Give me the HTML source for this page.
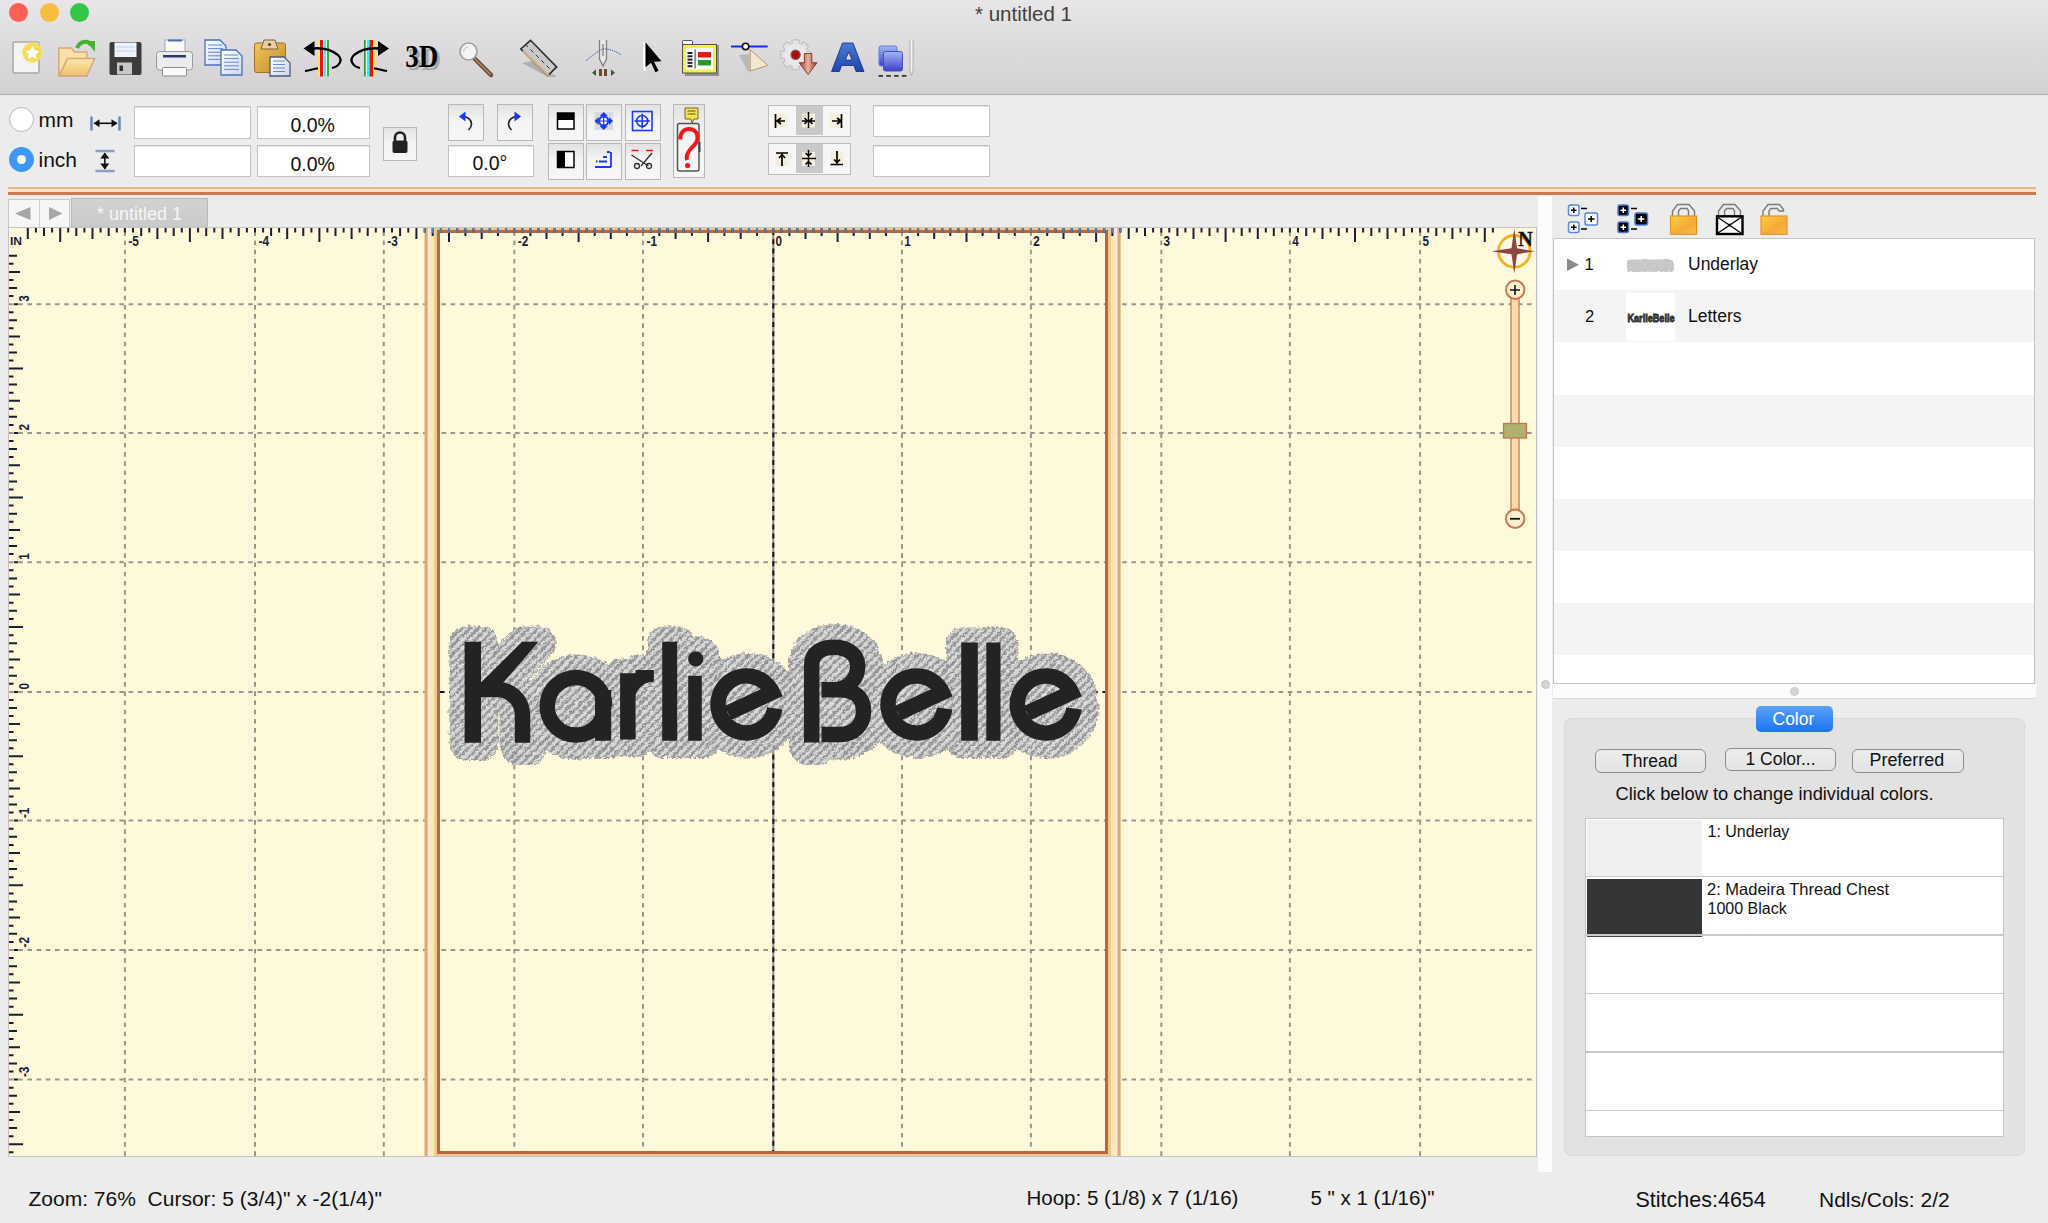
<!DOCTYPE html><html><head><meta charset="utf-8"><title>untitled 1</title><style>
*{box-sizing:border-box;margin:0;padding:0}
html,body{width:2048px;height:1223px;overflow:hidden;background:#ececec;font-family:"Liberation Sans",sans-serif;color:#111}
.a{position:absolute}
.t{position:absolute;white-space:nowrap;line-height:1}
.inp{position:absolute;background:#fff;border:1px solid #c3c3c3;box-shadow:inset 0 1px 0 #e4e4e4}
.btn{position:absolute;border:1.5px solid #b8b8b8;background:linear-gradient(#e2e2e2,#f4f4f4 45%,#f6f6f6)}
.pb{position:absolute;border:1px solid #8d8d8d;border-radius:6px;background:linear-gradient(#ececec,#e4e4e4);}
svg{position:absolute;overflow:visible}
</style></head><body>
<div class="a" style="left:0;top:0;width:2048px;height:95px;background:linear-gradient(#e8e6e8,#d2d0d2);border-bottom:1px solid #b0aeb0"></div>
<div class="a" style="left:8.899999999999999px;top:2.8px;width:19px;height:19px;border-radius:50%;background:#fd5f57"></div>
<div class="a" style="left:39.5px;top:2.8px;width:19px;height:19px;border-radius:50%;background:#f6be3f"></div>
<div class="a" style="left:70.2px;top:2.8px;width:19px;height:19px;border-radius:50%;background:#33c748"></div>
<div class="t" style="left:975px;top:4px;font-size:20.5px;color:#404040">* untitled 1</div>
<svg style="left:0;top:0" width="2048" height="95"><defs><linearGradient id="gfold" x1="0" y1="0" x2="0" y2="1"><stop offset="0" stop-color="#fbe7b0"/><stop offset="1" stop-color="#eec36a"/></linearGradient><linearGradient id="gclip" x1="0" y1="0" x2="1" y2="1"><stop offset="0" stop-color="#f0c860"/><stop offset="1" stop-color="#c08a28"/></linearGradient><linearGradient id="gdoc" x1="0" y1="0" x2="1" y2="1"><stop offset="0" stop-color="#ffffff"/><stop offset="1" stop-color="#c8d8f0"/></linearGradient><linearGradient id="gA" x1="0" y1="0" x2="0" y2="1"><stop offset="0" stop-color="#4a7ad8"/><stop offset="1" stop-color="#1a48a8"/></linearGradient><linearGradient id="gbd" x1="0" y1="0" x2="0" y2="1"><stop offset="0" stop-color="#a0b8f0"/><stop offset="1" stop-color="#4040c8"/></linearGradient><radialGradient id="gstar"><stop offset="0.5" stop-color="#fff27a"/><stop offset="1" stop-color="#fff27a" stop-opacity="0"/></radialGradient></defs><rect x="13" y="42" width="26" height="31" rx="1.5" fill="#f4f4f4" stroke="#a8a8a8" stroke-width="1.5"/><circle cx="32.3" cy="52.4" r="11.8" fill="url(#gstar)"/><circle cx="32.3" cy="52.4" r="10" fill="#f4d84a" opacity="0.8"/><path d="M32.30 44.80 L34.83 49.72 L40.29 50.60 L36.39 54.53 L37.24 60.00 L32.30 57.50 L27.36 60.00 L28.21 54.53 L24.31 50.60 L29.77 49.72Z" fill="#fff" stroke="#f0d020" stroke-width="0.8"/><path d="M58.8 48h12.5l3.5 4h12v24H58.8z" fill="#f8e0a8" stroke="#d8a878" stroke-width="1.5"/><path d="M67.5 58.6h27.2l-7.8 17.2H59z" fill="url(#gfold)" stroke="#d8a878" stroke-width="1.5"/><path d="M77 48c3-7 11-8 14-3" fill="none" stroke="#48b030" stroke-width="4"/><path d="M86 41h9v11z" fill="#48b030"/><rect x="109.5" y="42" width="32" height="33" rx="2" fill="#3c3c3c"/><rect x="114.5" y="42.5" width="22" height="14.5" fill="#eef2fa"/><path d="M116 47h19M116 51h19" stroke="#c0d0e8" stroke-width="1"/><rect x="117" y="62.5" width="15" height="12" fill="#c8c8c8"/><rect x="119.5" y="65.5" width="3.5" height="5.5" fill="#303030"/><rect x="165" y="40" width="20" height="15" fill="#fafafa" stroke="#9aa" stroke-width="1"/><rect x="168" y="39.5" width="14" height="2" fill="#4a70b0"/><rect x="156.5" y="51.5" width="36" height="18.5" rx="3" fill="#ececec" stroke="#9a9a9a" stroke-width="1"/><rect x="163" y="55" width="23" height="2.5" fill="#2a3a70"/><rect x="162.5" y="67.5" width="24" height="8.5" rx="1" fill="#fafafa" stroke="#8a8a8a" stroke-width="1"/><path d="M205 40h15l6 6v19h-21z" fill="url(#gdoc)" stroke="#4a70c0" stroke-width="1.3"/><path d="M208 45.0h14" stroke="#6a88c8" stroke-width="1"/><path d="M208 48.6h15" stroke="#6a88c8" stroke-width="1"/><path d="M208 52.2h15" stroke="#6a88c8" stroke-width="1"/><path d="M208 55.8h15" stroke="#6a88c8" stroke-width="1"/><path d="M208 59.4h15" stroke="#6a88c8" stroke-width="1"/><path d="M221 50h15l6 6v19h-21z" fill="url(#gdoc)" stroke="#4a70c0" stroke-width="1.3"/><path d="M224 55.0h14" stroke="#6a88c8" stroke-width="1"/><path d="M224 58.6h15" stroke="#6a88c8" stroke-width="1"/><path d="M224 62.2h15" stroke="#6a88c8" stroke-width="1"/><path d="M224 65.8h15" stroke="#6a88c8" stroke-width="1"/><path d="M224 69.4h15" stroke="#6a88c8" stroke-width="1"/><rect x="254.5" y="43" width="31" height="29.5" rx="2" fill="url(#gclip)" stroke="#a07020" stroke-width="1"/><path d="M264 40h11l3 9h-17z" fill="#e8d0a0" stroke="#806040" stroke-width="1"/><circle cx="269.5" cy="44.5" r="1.6" fill="#604020"/><path d="M270 57h14l6 6v13h-20z" fill="url(#gdoc)" stroke="#505a70" stroke-width="1.3"/><path d="M273 61.0h12" stroke="#6a88c8" stroke-width="1"/><path d="M273 64.5h12" stroke="#6a88c8" stroke-width="1"/><path d="M273 68.0h12" stroke="#6a88c8" stroke-width="1"/><path d="M273 71.5h12" stroke="#6a88c8" stroke-width="1"/><rect x="318.2" y="40" width="1.8" height="36.5" fill="#ffee30"/><rect x="320.0" y="40" width="3" height="36.5" fill="#e81010"/><rect x="323.0" y="40" width="1" height="36.5" fill="#ffffff"/><rect x="324.0" y="40" width="2.2" height="36.5" fill="#30f0f8"/><rect x="326.2" y="40" width="1" height="36.5" fill="#ffffff"/><rect x="327.2" y="40" width="1.6" height="36.5" fill="#20a020"/><path d="M303.5 48.5l11-7.5v15z" fill="#000"/><path d="M313 48.5c10-1 18 1 25 6.5c5 5 2 11-6 13" fill="none" stroke="#000" stroke-width="2.3"/><path d="M305 71c5-1 9-2 13-2.8" fill="none" stroke="#000" stroke-width="2"/><rect x="364.0" y="40" width="1.8" height="36.5" fill="#20a020"/><rect x="365.8" y="40" width="1.1" height="36.5" fill="#ffffff"/><rect x="366.9" y="40" width="2.7" height="36.5" fill="#30f0f8"/><rect x="369.6" y="40" width="3.4" height="36.5" fill="#e81010"/><rect x="373.0" y="40" width="2" height="36.5" fill="#ffee30"/><path d="M389 48.5l-11-7.5v15z" fill="#000"/><path d="M379 48.5c-10-1-18 1-25 6.5c-5 5-2 11 6 13" fill="none" stroke="#000" stroke-width="2.3"/><path d="M387 71c-5-1-9-2-13-2.8" fill="none" stroke="#000" stroke-width="2"/><text x="408" y="70" font-family="Liberation Serif" font-weight="bold" font-size="31" fill="#a8a8a8" textLength="33" lengthAdjust="spacingAndGlyphs">3D</text><text x="405.3" y="67.3" font-family="Liberation Serif" font-weight="bold" font-size="31" fill="#000" textLength="33" lengthAdjust="spacingAndGlyphs">3D</text><path d="M474 58l17 17" stroke="#5a4a3a" stroke-width="4.5" stroke-linecap="round"/><path d="M474 58l17 17" stroke="#c09060" stroke-width="1.5"/><circle cx="468.5" cy="51.5" r="8.5" fill="#f4f4f4" stroke="#a0a0a0" stroke-width="1.6"/><path d="M463.5 52a5 5 0 0 1 5-5" stroke="#d0d0d0" stroke-width="1.5" fill="none"/><path d="M522 63l10 -2l25 16l-9 0z" fill="#a0a0a0" opacity="0.7"/><path d="M520.8 49l9.7-8.7l26.2 26.6l-8.7 8.7z" fill="#c8c8c8" stroke="#2a2a2a" stroke-width="1.6"/><path d="M523 51l26 25" stroke="#d8b080" stroke-width="2"/><path d="M525.0 44.0l3 3" stroke="#333" stroke-width="1"/><path d="M530.4 49.4l3 3" stroke="#333" stroke-width="1"/><path d="M535.8 54.8l3 3" stroke="#333" stroke-width="1"/><path d="M541.2 60.2l3 3" stroke="#333" stroke-width="1"/><path d="M546.6 65.6l3 3" stroke="#333" stroke-width="1"/><path d="M599.5 40v19l3.5 7l3.5-7v-19" fill="#e8e8e8" stroke="#808080" stroke-width="1.3"/><path d="M603 44v12" stroke="#606060" stroke-width="1"/><path d="M586 60.8c8-7 16-12 17-12c6 0 12 2 18 6" fill="none" stroke="#4a6aa8" stroke-width="1" stroke-dasharray="1.5 0.8"/><path d="M596 69.5v6.5l-4-3.2z" fill="#306030"/><path d="M611 69.5v6.5l4-3.2z" fill="#306030"/><rect x="599" y="69" width="3" height="7" fill="#704830"/><rect x="604" y="69" width="3" height="7" fill="#704830"/><path d="M644.5 42v29" stroke="#fff" stroke-width="2.5"/><path d="M645.5 42.3v25l5.5-4.5l4.5 9.5l3-1.5l-4.5-9l7.5-.5z" fill="#000"/><rect x="685" y="45" width="34" height="31" fill="#909090"/><rect x="682.5" y="40.5" width="10" height="6" rx="1" fill="#fff" stroke="#555" stroke-width="1"/><rect x="682.5" y="44.5" width="34" height="28.5" fill="#f8f040" stroke="#505050" stroke-width="1"/><rect x="686" y="48" width="27" height="21.5" fill="#fff"/><rect x="687.5" y="52.0" width="5" height="2" fill="#222"/><rect x="687.5" y="55.3" width="5" height="2" fill="#222"/><rect x="687.5" y="58.6" width="5" height="2" fill="#222"/><rect x="687.5" y="61.9" width="5" height="2" fill="#222"/><rect x="687.5" y="65.2" width="5" height="2" fill="#222"/><rect x="694.5" y="49.5" width="1.2" height="19" fill="#555"/><rect x="698" y="52" width="13" height="5.5" fill="#e81818"/><rect x="698" y="60" width="13" height="5.5" fill="#289828"/><path d="M739 55l10.5 19l0-20z" fill="#b0b0b0" opacity="0.8"/><path d="M750.2 49.5l17.5 15.9l-17.5 5.6z" fill="#f2e8d0" stroke="#c09070" stroke-width="1"/><path d="M731 46.4h36.7" stroke="#1a2af0" stroke-width="2"/><circle cx="745.6" cy="46.4" r="3.2" fill="#fff" stroke="#111" stroke-width="1.6"/><rect x="-3.6" y="-15" width="7.2" height="8" rx="1.5" transform="translate(795.6 54.8) rotate(0)" fill="#e2e2e2" stroke="#bcbcbc" stroke-width="1"/><rect x="-3.6" y="-15" width="7.2" height="8" rx="1.5" transform="translate(795.6 54.8) rotate(45)" fill="#e2e2e2" stroke="#bcbcbc" stroke-width="1"/><rect x="-3.6" y="-15" width="7.2" height="8" rx="1.5" transform="translate(795.6 54.8) rotate(90)" fill="#e2e2e2" stroke="#bcbcbc" stroke-width="1"/><rect x="-3.6" y="-15" width="7.2" height="8" rx="1.5" transform="translate(795.6 54.8) rotate(135)" fill="#e2e2e2" stroke="#bcbcbc" stroke-width="1"/><rect x="-3.6" y="-15" width="7.2" height="8" rx="1.5" transform="translate(795.6 54.8) rotate(180)" fill="#e2e2e2" stroke="#bcbcbc" stroke-width="1"/><rect x="-3.6" y="-15" width="7.2" height="8" rx="1.5" transform="translate(795.6 54.8) rotate(225)" fill="#e2e2e2" stroke="#bcbcbc" stroke-width="1"/><rect x="-3.6" y="-15" width="7.2" height="8" rx="1.5" transform="translate(795.6 54.8) rotate(270)" fill="#e2e2e2" stroke="#bcbcbc" stroke-width="1"/><rect x="-3.6" y="-15" width="7.2" height="8" rx="1.5" transform="translate(795.6 54.8) rotate(315)" fill="#e2e2e2" stroke="#bcbcbc" stroke-width="1"/><circle cx="795.6" cy="54.8" r="11.3" fill="#e8e8e8"/><circle cx="795.6" cy="54.8" r="4.6" fill="#a81010" stroke="#8a5a40" stroke-width="1.2"/><defs><linearGradient id="garr" x1="0" y1="0" x2="1" y2="0"><stop offset="0" stop-color="#9a3a2a"/><stop offset="0.5" stop-color="#e8b0a0"/><stop offset="1" stop-color="#9a3a2a"/></linearGradient></defs><path d="M804.4 53.5h7.4v9.3h5.1l-8.8 11.8l-8.8-11.8h5.1z" fill="url(#garr)" stroke="#7a3020" stroke-width="0.9"/><path d="M842.5 43h10.5l11 28.5h-8l-2-6h-12.5l-2 6h-8zM845.3 60h6.8l-3.4-8z" fill="url(#gA)" stroke="#102a80" stroke-width="0.8" fill-rule="evenodd"/><rect x="879" y="46" width="18" height="20" rx="2" fill="url(#gbd)" stroke="#6080d0" stroke-width="1"/><rect x="883.5" y="51.5" width="19" height="19.5" rx="2" fill="url(#gbd)" stroke="#4050c0" stroke-width="1"/><path d="M878.5 75.8h28" stroke="#333" stroke-width="1.8" stroke-dasharray="4.5 3.3"/><path d="M910 40v30l1.5 6l1.5-6v-30" fill="#f4f4f4" stroke="#b0b0b0" stroke-width="1"/></svg>
<div class="a" style="left:9px;top:107.2px;width:25px;height:25px;border-radius:50%;background:#fff;border:1px solid #b8b8b8"></div>
<div class="a" style="left:9px;top:147px;width:25px;height:25px;border-radius:50%;background:#3d97f7"></div>
<div class="a" style="left:17px;top:155px;width:9px;height:9px;border-radius:50%;background:#fff"></div>
<div class="t" style="left:38.5px;top:109px;font-size:21px">mm</div>
<div class="t" style="left:38.5px;top:149px;font-size:21px">inch</div>
<svg style="left:0;top:0" width="200" height="190"><path d="M91.5 116.5v14M119.5 116.5v14" stroke="#6a88b8" stroke-width="2.5"/><path d="M94 123.3h23" stroke="#111" stroke-width="1.6"/><path d="M93.5 123.3l6-4v8z M117.5 123.3l-6-4v8z" fill="#111"/><path d="M95.5 151h19M95.5 171h19" stroke="#8aa0c0" stroke-width="2.5"/><path d="M104.8 153v16" stroke="#111" stroke-width="1.6"/><path d="M104.8 152.5l-4.5 6h9z M104.8 169.5l-4.5-6h9z" fill="#111"/></svg>
<div class="inp" style="left:134px;top:106px;width:117px;height:33px"></div>
<div class="inp" style="left:257px;top:106px;width:113px;height:33px"></div>
<div class="inp" style="left:134px;top:145px;width:117px;height:32px"></div>
<div class="inp" style="left:257px;top:145px;width:113px;height:32px"></div>
<div class="inp" style="left:448px;top:145px;width:86px;height:32px"></div>
<div class="inp" style="left:873px;top:105px;width:117px;height:32px"></div>
<div class="inp" style="left:873px;top:145px;width:117px;height:32px"></div>
<div class="t" style="left:290.5px;top:116px;font-size:19.5px">0.0%</div>
<div class="t" style="left:290.5px;top:154.5px;font-size:19.5px">0.0%</div>
<div class="t" style="left:472.5px;top:154px;font-size:19.5px">0.0°</div>
<div class="btn" style="left:383px;top:127px;width:34px;height:34px"></div>
<svg style="left:0;top:0" width="420" height="170"><path d="M395 141v-3.5a5 5 0 0 1 10 0v3.5" fill="none" stroke="#222" stroke-width="2.6"/><rect x="392.5" y="140.5" width="15" height="12.5" rx="2" fill="#222"/></svg>
<div class="btn" style="left:448px;top:104px;width:36px;height:37px"></div>
<div class="btn" style="left:497px;top:104px;width:36px;height:37px"></div>
<svg style="left:0;top:0" width="540" height="145"><path d="M462.5 116.5c5 0 9 3 9 7.5c0 2.5-1.5 4.5-3 6" fill="none" stroke="#222" stroke-width="1.6"/><path d="M459 116.5l6.5-5v10z" fill="#1a3af0"/><path d="M517.5 116.5c-5 0-9 3-9 7.5c0 2.5 1.5 4.5 3 6" fill="none" stroke="#222" stroke-width="1.6"/><path d="M521 116.5l-6.5-5v10z" fill="#1a3af0"/></svg>
<div class="btn" style="left:547.5px;top:104px;width:36px;height:36.5px"></div>
<div class="btn" style="left:547.5px;top:143px;width:36px;height:36.5px"></div>
<div class="btn" style="left:586px;top:104px;width:36px;height:36.5px"></div>
<div class="btn" style="left:586px;top:143px;width:36px;height:36.5px"></div>
<div class="btn" style="left:624.5px;top:104px;width:36px;height:36.5px"></div>
<div class="btn" style="left:624.5px;top:143px;width:36px;height:36.5px"></div>
<svg style="left:0;top:0" width="720" height="185"><rect x="557.5" y="113" width="16.5" height="16" fill="#fff" stroke="#000" stroke-width="1.5"/><rect x="557.5" y="113" width="16.5" height="7" fill="#000"/><rect x="557.5" y="151.5" width="16.5" height="16" fill="#fff" stroke="#000" stroke-width="1.5"/><rect x="557.5" y="151.5" width="7.5" height="16" fill="#000"/><rect x="594.5" y="112" width="18.5" height="18" fill="#d8d8e0"/><path d="M603.7 112l-4 4h8zM603.7 130l-4-4h8zM594.5 121l4-4v8zM613 121l-4-4v8z" fill="#1a3af0"/><circle cx="603.7" cy="121" r="4.5" fill="#fff" stroke="#1a3af0" stroke-width="2"/><path d="M603.7 116v10M598.7 121h10" stroke="#1a3af0" stroke-width="1.2"/><rect x="632.5" y="111.5" width="19.5" height="19" fill="none" stroke="#1a3af0" stroke-width="1.6"/><circle cx="642.2" cy="121" r="5.5" fill="none" stroke="#1a3af0" stroke-width="1.6"/><path d="M642.2 113.5v15M634.5 121h15.5" stroke="#1a3af0" stroke-width="1.6"/><path d="M607 152h3M611 152v15M595 167h16M599 161.5h8M596 161.5h1.5M603 157h4" stroke="#1a3af0" stroke-width="1.8"/><path d="M631.5 150.5h7M646 150.5h7" stroke="#e81818" stroke-width="1.6"/><path d="M631.5 155l17 11M652 153l-11 13" stroke="#333" stroke-width="1.3"/><circle cx="637" cy="166" r="2.5" fill="none" stroke="#333" stroke-width="1.3"/><circle cx="649" cy="166" r="2.5" fill="none" stroke="#333" stroke-width="1.3"/></svg>
<div class="btn" style="left:673px;top:104px;width:32px;height:73.5px"></div>
<svg style="left:0;top:0" width="720" height="185"><rect x="677.5" y="123.5" width="21.5" height="47.5" rx="2" fill="none" stroke="#555" stroke-width="1.5"/><rect x="698.5" y="142" width="2" height="10" fill="#444"/><path d="M685 108h13v11h-4l-2 4l-1-4h-6z" fill="#f8e048" stroke="#6a6a20" stroke-width="1"/><path d="M687.5 111h8M687.5 114h8" stroke="#555" stroke-width="1"/><path d="M680.3 139.5C680.3 132 684.5 129 689 129C694 129 697.5 132.5 697.5 138C697.5 146 688 147.5 686.8 156.5C686.6 158 686.8 159 687 160" fill="none" stroke="#f01818" stroke-width="4"/><circle cx="687.6" cy="165.6" r="2.6" fill="#f01818"/></svg>
<div class="a" style="left:768px;top:104.5px;width:83px;height:32px;border:1.5px solid #bdbdbd;background:#f6f6f6"></div>
<div class="a" style="left:795.5px;top:106.0px;width:27px;height:29px;background:#c9c9c9"></div>
<div class="a" style="left:768px;top:142.5px;width:83px;height:32px;border:1.5px solid #bdbdbd;background:#f6f6f6"></div>
<div class="a" style="left:795.5px;top:144.0px;width:27px;height:29px;background:#c9c9c9"></div>
<svg style="left:0;top:0" width="860" height="185"><rect x="774.5" y="113.5" width="13" height="14" fill="#f3efdc"/><rect x="802.0" y="113.5" width="13" height="14" fill="#f3efdc"/><rect x="829.5" y="113.5" width="13" height="14" fill="#f3efdc"/><rect x="775.5" y="152" width="13" height="14" fill="#f3efdc"/><rect x="802.0" y="152" width="13" height="14" fill="#f3efdc"/><rect x="830.5" y="152" width="13" height="14" fill="#f3efdc"/><path d="M775.5 114v14M776 121h9M781 118l-4 3l4 3" stroke="#000" stroke-width="1.7" fill="none"/><path d="M808.5 112v16M802 121h13M804.5 118l3 3l-3 3M812.5 118l-3 3l3 3" stroke="#000" stroke-width="1.5" fill="none"/><path d="M841.5 114v14M832 121h9M837 118l4 3l-4 3" stroke="#000" stroke-width="1.7" fill="none"/><path d="M776 153h12M782 154v12M779 158l3-3.5l3 3.5" stroke="#000" stroke-width="1.7" fill="none"/><path d="M802 158.5h14M808.5 150v17M805.5 153l3 3l3-3M805.5 164.5l3-3l3 3" stroke="#000" stroke-width="1.5" fill="none"/><path d="M830.5 164.5h12.5M837 151v12.5M834 159.5l3 3l3-3" stroke="#000" stroke-width="1.7" fill="none"/></svg>
<div class="a" style="left:8px;top:187px;width:2028px;height:8px;background:linear-gradient(#e8b78a 0,#e8b78a 2px,#fbe3cf 2px,#fbe3cf 5px,#c97a50 5px,#c97a50 8px)"></div>
<div class="a" style="left:8px;top:199px;width:62px;height:29px;background:#f6f6f6;border:1px solid #c8c8c8;border-bottom:none"></div>
<div class="a" style="left:39px;top:200px;width:1px;height:27px;background:#d0d0d0"></div>
<svg style="left:0;top:0" width="80" height="230"><path d="M15 213.5l15.5-6.5v13z" fill="#a6a6a6"/><path d="M62.5 213.5l-13.5-6.5v13z" fill="#a6a6a6"/></svg>
<div class="a" style="left:70.5px;top:197.5px;width:137px;height:30px;background:linear-gradient(#d2d2d2,#c9c9c9);border:1px solid #b8b8b8;border-bottom:none"></div>
<div class="t" style="left:97px;top:204.5px;font-size:18px;color:#f6f6f6">* untitled 1</div>
<svg style="left:0;top:0" width="2048" height="1223"><defs><pattern id="hatch" width="6" height="6" patternUnits="userSpaceOnUse" patternTransform="rotate(-45)"><rect width="6" height="6" fill="#c0c0c0"/><rect width="6" height="1.7" fill="#8c8c8c"/><rect y="3" width="6" height="1.5" fill="#e2e2e2"/></pattern><filter id="rough" x="-5%" y="-20%" width="110%" height="140%"><feTurbulence type="turbulence" baseFrequency="0.22" numOctaves="2" seed="5" result="n"/><feDisplacementMap in="SourceGraphic" in2="n" scale="4.5" xChannelSelector="R" yChannelSelector="G"/></filter></defs><rect x="8" y="227" width="1529" height="930" fill="#c4c4c4"/><rect x="9" y="228" width="1527" height="928" fill="#fff9db"/><clipPath id="cc"><rect x="9" y="228" width="1527" height="928"/></clipPath><g clip-path="url(#cc)"><path d="M124.9 228V1156 M255.0 228V1156 M383.8 228V1156 M514.3 228V1156 M643.0 228V1156 M902.0 228V1156 M1030.9 228V1156 M1161.3 228V1156 M1289.9 228V1156 M1420.1 228V1156" stroke="#98988f" stroke-width="2" stroke-dasharray="4.6 4.6" stroke-dashoffset="-3.3" fill="none"/><path d="M9 304.2H1536 M9 432.9H1536 M9 562.2H1536 M9 691.9H1536 M9 820.6H1536 M9 950.0H1536 M9 1079.6H1536" stroke="#98988f" stroke-width="2" stroke-dasharray="4.6 4.6" fill="none"/><path d="M440 691.9H1105" stroke="#fff9db" stroke-width="2.5"/><path d="M440 691.9H1105" stroke="#161616" stroke-width="2" stroke-dasharray="4.6 4.6"/><path d="M773.3 228V1156" stroke="#8a8a8a" stroke-width="2"/><path d="M773.3 228V1156" stroke="#161616" stroke-width="2" stroke-dasharray="5 4.2" stroke-dashoffset="-2"/><rect x="424.5" y="228" width="3.3" height="928" fill="#dba972"/><rect x="427.8" y="228" width="3.1" height="928" fill="#fde4d8"/><rect x="430.9" y="228" width="3.3" height="928" fill="#fdeba0"/><rect x="1117.3" y="228" width="3.3" height="928" fill="#dba972"/><rect x="1114.1" y="228" width="3.2" height="928" fill="#fde4d8"/><rect x="1111" y="228" width="3.1" height="928" fill="#fdeba0"/><path d="M434.2 228H1111V1156H434.2ZM437 230V1154H1108V230Z" fill="#ebc892" fill-rule="evenodd"/><path d="M437 230H1108V1154H437ZM440 233V1151H1105V233Z" fill="#b9683e" fill-rule="evenodd"/><g><g filter="url(#rough)"><path d="M464.6 641.7H481V742.8H464.6Z M522 641.7H538.5L497 690H481V682.5Z M595 690H611.2V740.8H595Z M620.1 673.2H635.6V739.6H620.1Z M635.6 670.1H653.9V681.8C645 681.8 638 687 635.6 695.4Z M662.2 641.7H677.2V740.8H662.2Z M688.2 675.8H701.8V740.8H688.2Z M961.2 642.6H977.8V740.7H961.2Z M986.3 642.6H1000.5V740.7H986.3Z" fill="#a0a0a0" stroke="#a0a0a0" stroke-width="32.4" stroke-linejoin="round"/><path d="M481 689.5H497A25.5 25.5 0 0 1 522.5 715V742.8 M602.06 718.45A28.75 28.75 0 1 1 604.75 706.3 M811.7 742.4V665C811.7 652 822 647.3 834.7 647.3C848 647.3 857.7 655 857.7 666C857.7 677 850 689.8 834 689.8H821.5 M821.5 689.8H840C855 689.8 863.5 698 863.5 711C863.5 726 853 734.5 840 734.5H821.5 M774.72 708.37A28.5 28.5 0 1 1 772.33 692.36L728.00 713.00 M944.72 708.47A28.5 28.5 0 1 1 942.33 692.46L898.00 713.10 M1074.02 708.47A28.5 28.5 0 1 1 1071.63 692.46L1027.30 713.10" fill="none" stroke="#a0a0a0" stroke-width="47.9" stroke-linecap="round" stroke-linejoin="round"/><circle cx="695.7" cy="658.8" r="23.799999999999997" fill="#a0a0a0"/><circle cx="576" cy="706.3" r="22" fill="#a0a0a0"/><circle cx="746.5" cy="704.4" r="22" fill="#a0a0a0"/><circle cx="916.5" cy="704.5" r="22" fill="#a0a0a0"/><circle cx="1045.8" cy="704.5" r="22" fill="#a0a0a0"/><circle cx="835" cy="668" r="14" fill="#a0a0a0"/><circle cx="840" cy="712" r="16" fill="#a0a0a0"/><path d="M464.6 641.7H481V742.8H464.6Z M522 641.7H538.5L497 690H481V682.5Z M595 690H611.2V740.8H595Z M620.1 673.2H635.6V739.6H620.1Z M635.6 670.1H653.9V681.8C645 681.8 638 687 635.6 695.4Z M662.2 641.7H677.2V740.8H662.2Z M688.2 675.8H701.8V740.8H688.2Z M961.2 642.6H977.8V740.7H961.2Z M986.3 642.6H1000.5V740.7H986.3Z" fill="url(#hatch)" stroke="url(#hatch)" stroke-width="30.4" stroke-linejoin="round"/><path d="M481 689.5H497A25.5 25.5 0 0 1 522.5 715V742.8 M602.06 718.45A28.75 28.75 0 1 1 604.75 706.3 M811.7 742.4V665C811.7 652 822 647.3 834.7 647.3C848 647.3 857.7 655 857.7 666C857.7 677 850 689.8 834 689.8H821.5 M821.5 689.8H840C855 689.8 863.5 698 863.5 711C863.5 726 853 734.5 840 734.5H821.5 M774.72 708.37A28.5 28.5 0 1 1 772.33 692.36L728.00 713.00 M944.72 708.47A28.5 28.5 0 1 1 942.33 692.46L898.00 713.10 M1074.02 708.47A28.5 28.5 0 1 1 1071.63 692.46L1027.30 713.10" fill="none" stroke="url(#hatch)" stroke-width="45.9" stroke-linecap="round" stroke-linejoin="round"/><circle cx="695.7" cy="658.8" r="22.799999999999997" fill="url(#hatch)"/><circle cx="576" cy="706.3" r="22" fill="url(#hatch)"/><circle cx="746.5" cy="704.4" r="22" fill="url(#hatch)"/><circle cx="916.5" cy="704.5" r="22" fill="url(#hatch)"/><circle cx="1045.8" cy="704.5" r="22" fill="url(#hatch)"/><circle cx="835" cy="668" r="14" fill="url(#hatch)"/><circle cx="840" cy="712" r="16" fill="url(#hatch)"/></g><path d="M464.6 641.7H481V742.8H464.6Z M522 641.7H538.5L497 690H481V682.5Z M595 690H611.2V740.8H595Z M620.1 673.2H635.6V739.6H620.1Z M635.6 670.1H653.9V681.8C645 681.8 638 687 635.6 695.4Z M662.2 641.7H677.2V740.8H662.2Z M688.2 675.8H701.8V740.8H688.2Z M961.2 642.6H977.8V740.7H961.2Z M986.3 642.6H1000.5V740.7H986.3Z" fill="#232325"/><path d="M481 689.5H497A25.5 25.5 0 0 1 522.5 715V742.8 M602.06 718.45A28.75 28.75 0 1 1 604.75 706.3 M811.7 742.4V665C811.7 652 822 647.3 834.7 647.3C848 647.3 857.7 655 857.7 666C857.7 677 850 689.8 834 689.8H821.5 M821.5 689.8H840C855 689.8 863.5 698 863.5 711C863.5 726 853 734.5 840 734.5H821.5 M774.72 708.37A28.5 28.5 0 1 1 772.33 692.36L728.00 713.00 M944.72 708.47A28.5 28.5 0 1 1 942.33 692.46L898.00 713.10 M1074.02 708.47A28.5 28.5 0 1 1 1071.63 692.46L1027.30 713.10" fill="none" stroke="#232325" stroke-width="15.5"/><circle cx="695.7" cy="658.8" r="7.6" fill="#232325"/></g></g><path d="M27.8 228v11 M35.9 228v4.5 M44.0 228v8 M52.1 228v4.5 M60.2 228v14 M68.2 228v4.5 M76.3 228v8 M84.4 228v4.5 M92.5 228v11 M100.6 228v4.5 M108.7 228v8 M116.8 228v4.5 M124.9 228v4.5 M133.0 228v4.5 M141.2 228v8 M149.3 228v4.5 M157.4 228v11 M165.6 228v4.5 M173.7 228v8 M181.8 228v4.5 M189.9 228v14 M198.1 228v4.5 M206.2 228v8 M214.3 228v4.5 M222.5 228v11 M230.6 228v4.5 M238.7 228v8 M246.9 228v4.5 M255.0 228v4.5 M263.1 228v4.5 M271.1 228v8 M279.1 228v4.5 M287.2 228v11 M295.2 228v4.5 M303.3 228v8 M311.4 228v4.5 M319.4 228v14 M327.4 228v4.5 M335.5 228v8 M343.6 228v4.5 M351.6 228v11 M359.6 228v4.5 M367.7 228v8 M375.8 228v4.5 M383.8 228v4.5 M392.0 228v4.5 M400.1 228v8 M408.3 228v4.5 M416.4 228v11 M424.6 228v4.5 M432.7 228v8 M440.9 228v4.5 M449.0 228v14 M457.2 228v4.5 M465.4 228v8 M473.5 228v4.5 M481.7 228v11 M489.8 228v4.5 M498.0 228v8 M506.1 228v4.5 M514.3 228v4.5 M522.3 228v4.5 M530.4 228v8 M538.4 228v4.5 M546.5 228v11 M554.5 228v4.5 M562.6 228v8 M570.6 228v4.5 M578.6 228v14 M586.7 228v4.5 M594.7 228v8 M602.8 228v4.5 M610.8 228v11 M618.9 228v4.5 M626.9 228v8 M635.0 228v4.5 M643.0 228v4.5 M651.1 228v4.5 M659.3 228v8 M667.4 228v4.5 M675.6 228v11 M683.7 228v4.5 M691.9 228v8 M700.0 228v4.5 M708.1 228v14 M716.3 228v4.5 M724.4 228v8 M732.6 228v4.5 M740.7 228v11 M748.9 228v4.5 M757.0 228v8 M765.2 228v4.5 M773.3 228v4.5 M781.3 228v4.5 M789.4 228v8 M797.4 228v4.5 M805.5 228v11 M813.5 228v4.5 M821.6 228v8 M829.6 228v4.5 M837.6 228v14 M845.7 228v4.5 M853.7 228v8 M861.8 228v4.5 M869.8 228v11 M877.9 228v4.5 M885.9 228v8 M894.0 228v4.5 M902.0 228v4.5 M910.1 228v4.5 M918.1 228v8 M926.2 228v4.5 M934.2 228v11 M942.3 228v4.5 M950.3 228v8 M958.4 228v4.5 M966.5 228v14 M974.5 228v4.5 M982.6 228v8 M990.6 228v4.5 M998.7 228v11 M1006.7 228v4.5 M1014.8 228v8 M1022.8 228v4.5 M1030.9 228v4.5 M1039.1 228v4.5 M1047.2 228v8 M1055.4 228v4.5 M1063.5 228v11 M1071.7 228v4.5 M1079.8 228v8 M1088.0 228v4.5 M1096.1 228v14 M1104.2 228v4.5 M1112.4 228v8 M1120.5 228v4.5 M1128.7 228v11 M1136.8 228v4.5 M1145.0 228v8 M1153.1 228v4.5 M1161.3 228v4.5 M1169.3 228v4.5 M1177.4 228v8 M1185.4 228v4.5 M1193.5 228v11 M1201.5 228v4.5 M1209.5 228v8 M1217.6 228v4.5 M1225.6 228v14 M1233.6 228v4.5 M1241.7 228v8 M1249.7 228v4.5 M1257.8 228v11 M1265.8 228v4.5 M1273.8 228v8 M1281.9 228v4.5 M1289.9 228v4.5 M1298.0 228v4.5 M1306.2 228v8 M1314.3 228v4.5 M1322.5 228v11 M1330.6 228v4.5 M1338.7 228v8 M1346.9 228v4.5 M1355.0 228v14 M1363.1 228v4.5 M1371.3 228v8 M1379.4 228v4.5 M1387.5 228v11 M1395.7 228v4.5 M1403.8 228v8 M1412.0 228v4.5 M1420.1 228v4.5 M1428.2 228v4.5 M1436.3 228v8 M1444.4 228v4.5 M1452.4 228v11 M1460.5 228v4.5 M1468.6 228v8 M1476.7 228v4.5 M1484.8 228v14 M1492.9 228v4.5 M9 1152.3h4.5 M9 1144.2h14 M9 1136.2h4.5 M9 1128.1h8 M9 1120.0h4.5 M9 1111.9h11 M9 1103.8h4.5 M9 1095.8h8 M9 1087.7h4.5 M9 1071.5h4.5 M9 1063.4h8 M9 1055.3h4.5 M9 1047.2h11 M9 1039.1h4.5 M9 1031.0h8 M9 1022.9h4.5 M9 1014.8h14 M9 1006.7h4.5 M9 998.6h8 M9 990.5h4.5 M9 982.4h11 M9 974.3h4.5 M9 966.2h8 M9 958.1h4.5 M9 941.9h4.5 M9 933.8h8 M9 925.7h4.5 M9 917.6h11 M9 909.6h4.5 M9 901.5h8 M9 893.4h4.5 M9 885.3h14 M9 877.2h4.5 M9 869.1h8 M9 861.0h4.5 M9 853.0h11 M9 844.9h4.5 M9 836.8h8 M9 828.7h4.5 M9 812.6h4.5 M9 804.5h8 M9 796.5h4.5 M9 788.4h11 M9 780.4h4.5 M9 772.3h8 M9 764.3h4.5 M9 756.2h14 M9 748.2h4.5 M9 740.2h8 M9 732.1h4.5 M9 724.1h11 M9 716.0h4.5 M9 708.0h8 M9 699.9h4.5 M9 683.8h4.5 M9 675.7h8 M9 667.6h4.5 M9 659.5h11 M9 651.4h4.5 M9 643.3h8 M9 635.2h4.5 M9 627.0h14 M9 618.9h4.5 M9 610.8h8 M9 602.7h4.5 M9 594.6h11 M9 586.5h4.5 M9 578.4h8 M9 570.3h4.5 M9 554.1h4.5 M9 546.0h8 M9 538.0h4.5 M9 529.9h11 M9 521.8h4.5 M9 513.7h8 M9 505.6h4.5 M9 497.6h14 M9 489.5h4.5 M9 481.4h8 M9 473.3h4.5 M9 465.2h11 M9 457.1h4.5 M9 449.1h8 M9 441.0h4.5 M9 424.9h4.5 M9 416.8h8 M9 408.8h4.5 M9 400.7h11 M9 392.7h4.5 M9 384.6h8 M9 376.6h4.5 M9 368.5h14 M9 360.5h4.5 M9 352.5h8 M9 344.4h4.5 M9 336.4h11 M9 328.3h4.5 M9 320.3h8 M9 312.2h4.5 M9 296.1h4.5 M9 288.0h8 M9 280.0h4.5 M9 271.9h11 M9 263.8h4.5 M9 255.7h8" stroke="#1a2038" stroke-width="2"/><clipPath id="hooptop"><path d="M424 228H1121V233H424Z"/></clipPath><path d="M27.8 228v11 M35.9 228v4.5 M44.0 228v8 M52.1 228v4.5 M60.2 228v14 M68.2 228v4.5 M76.3 228v8 M84.4 228v4.5 M92.5 228v11 M100.6 228v4.5 M108.7 228v8 M116.8 228v4.5 M124.9 228v4.5 M133.0 228v4.5 M141.2 228v8 M149.3 228v4.5 M157.4 228v11 M165.6 228v4.5 M173.7 228v8 M181.8 228v4.5 M189.9 228v14 M198.1 228v4.5 M206.2 228v8 M214.3 228v4.5 M222.5 228v11 M230.6 228v4.5 M238.7 228v8 M246.9 228v4.5 M255.0 228v4.5 M263.1 228v4.5 M271.1 228v8 M279.1 228v4.5 M287.2 228v11 M295.2 228v4.5 M303.3 228v8 M311.4 228v4.5 M319.4 228v14 M327.4 228v4.5 M335.5 228v8 M343.6 228v4.5 M351.6 228v11 M359.6 228v4.5 M367.7 228v8 M375.8 228v4.5 M383.8 228v4.5 M392.0 228v4.5 M400.1 228v8 M408.3 228v4.5 M416.4 228v11 M424.6 228v4.5 M432.7 228v8 M440.9 228v4.5 M449.0 228v14 M457.2 228v4.5 M465.4 228v8 M473.5 228v4.5 M481.7 228v11 M489.8 228v4.5 M498.0 228v8 M506.1 228v4.5 M514.3 228v4.5 M522.3 228v4.5 M530.4 228v8 M538.4 228v4.5 M546.5 228v11 M554.5 228v4.5 M562.6 228v8 M570.6 228v4.5 M578.6 228v14 M586.7 228v4.5 M594.7 228v8 M602.8 228v4.5 M610.8 228v11 M618.9 228v4.5 M626.9 228v8 M635.0 228v4.5 M643.0 228v4.5 M651.1 228v4.5 M659.3 228v8 M667.4 228v4.5 M675.6 228v11 M683.7 228v4.5 M691.9 228v8 M700.0 228v4.5 M708.1 228v14 M716.3 228v4.5 M724.4 228v8 M732.6 228v4.5 M740.7 228v11 M748.9 228v4.5 M757.0 228v8 M765.2 228v4.5 M773.3 228v4.5 M781.3 228v4.5 M789.4 228v8 M797.4 228v4.5 M805.5 228v11 M813.5 228v4.5 M821.6 228v8 M829.6 228v4.5 M837.6 228v14 M845.7 228v4.5 M853.7 228v8 M861.8 228v4.5 M869.8 228v11 M877.9 228v4.5 M885.9 228v8 M894.0 228v4.5 M902.0 228v4.5 M910.1 228v4.5 M918.1 228v8 M926.2 228v4.5 M934.2 228v11 M942.3 228v4.5 M950.3 228v8 M958.4 228v4.5 M966.5 228v14 M974.5 228v4.5 M982.6 228v8 M990.6 228v4.5 M998.7 228v11 M1006.7 228v4.5 M1014.8 228v8 M1022.8 228v4.5 M1030.9 228v4.5 M1039.1 228v4.5 M1047.2 228v8 M1055.4 228v4.5 M1063.5 228v11 M1071.7 228v4.5 M1079.8 228v8 M1088.0 228v4.5 M1096.1 228v14 M1104.2 228v4.5 M1112.4 228v8 M1120.5 228v4.5 M1128.7 228v11 M1136.8 228v4.5 M1145.0 228v8 M1153.1 228v4.5 M1161.3 228v4.5 M1169.3 228v4.5 M1177.4 228v8 M1185.4 228v4.5 M1193.5 228v11 M1201.5 228v4.5 M1209.5 228v8 M1217.6 228v4.5 M1225.6 228v14 M1233.6 228v4.5 M1241.7 228v8 M1249.7 228v4.5 M1257.8 228v11 M1265.8 228v4.5 M1273.8 228v8 M1281.9 228v4.5 M1289.9 228v4.5 M1298.0 228v4.5 M1306.2 228v8 M1314.3 228v4.5 M1322.5 228v11 M1330.6 228v4.5 M1338.7 228v8 M1346.9 228v4.5 M1355.0 228v14 M1363.1 228v4.5 M1371.3 228v8 M1379.4 228v4.5 M1387.5 228v11 M1395.7 228v4.5 M1403.8 228v8 M1412.0 228v4.5 M1420.1 228v4.5 M1428.2 228v4.5 M1436.3 228v8 M1444.4 228v4.5 M1452.4 228v11 M1460.5 228v4.5 M1468.6 228v8 M1476.7 228v4.5 M1484.8 228v14 M1492.9 228v4.5 M9 1152.3h4.5 M9 1144.2h14 M9 1136.2h4.5 M9 1128.1h8 M9 1120.0h4.5 M9 1111.9h11 M9 1103.8h4.5 M9 1095.8h8 M9 1087.7h4.5 M9 1071.5h4.5 M9 1063.4h8 M9 1055.3h4.5 M9 1047.2h11 M9 1039.1h4.5 M9 1031.0h8 M9 1022.9h4.5 M9 1014.8h14 M9 1006.7h4.5 M9 998.6h8 M9 990.5h4.5 M9 982.4h11 M9 974.3h4.5 M9 966.2h8 M9 958.1h4.5 M9 941.9h4.5 M9 933.8h8 M9 925.7h4.5 M9 917.6h11 M9 909.6h4.5 M9 901.5h8 M9 893.4h4.5 M9 885.3h14 M9 877.2h4.5 M9 869.1h8 M9 861.0h4.5 M9 853.0h11 M9 844.9h4.5 M9 836.8h8 M9 828.7h4.5 M9 812.6h4.5 M9 804.5h8 M9 796.5h4.5 M9 788.4h11 M9 780.4h4.5 M9 772.3h8 M9 764.3h4.5 M9 756.2h14 M9 748.2h4.5 M9 740.2h8 M9 732.1h4.5 M9 724.1h11 M9 716.0h4.5 M9 708.0h8 M9 699.9h4.5 M9 683.8h4.5 M9 675.7h8 M9 667.6h4.5 M9 659.5h11 M9 651.4h4.5 M9 643.3h8 M9 635.2h4.5 M9 627.0h14 M9 618.9h4.5 M9 610.8h8 M9 602.7h4.5 M9 594.6h11 M9 586.5h4.5 M9 578.4h8 M9 570.3h4.5 M9 554.1h4.5 M9 546.0h8 M9 538.0h4.5 M9 529.9h11 M9 521.8h4.5 M9 513.7h8 M9 505.6h4.5 M9 497.6h14 M9 489.5h4.5 M9 481.4h8 M9 473.3h4.5 M9 465.2h11 M9 457.1h4.5 M9 449.1h8 M9 441.0h4.5 M9 424.9h4.5 M9 416.8h8 M9 408.8h4.5 M9 400.7h11 M9 392.7h4.5 M9 384.6h8 M9 376.6h4.5 M9 368.5h14 M9 360.5h4.5 M9 352.5h8 M9 344.4h4.5 M9 336.4h11 M9 328.3h4.5 M9 320.3h8 M9 312.2h4.5 M9 296.1h4.5 M9 288.0h8 M9 280.0h4.5 M9 271.9h11 M9 263.8h4.5 M9 255.7h8" stroke="#4f80bb" stroke-width="2" clip-path="url(#hooptop)"/><path d="M14 304.2h4 M14 432.9h4 M14 562.2h4 M14 691.9h4 M14 820.6h4 M14 950.0h4 M14 1079.6h4" stroke="#1a2038" stroke-width="2"/><g font-family="Liberation Sans"><text x="128.4" y="246.3" font-size="14" font-weight="bold" textLength="10.5" lengthAdjust="spacingAndGlyphs" fill="#1a2038">-5</text><text x="258.5" y="246.3" font-size="14" font-weight="bold" textLength="10.5" lengthAdjust="spacingAndGlyphs" fill="#1a2038">-4</text><text x="387.3" y="246.3" font-size="14" font-weight="bold" textLength="10.5" lengthAdjust="spacingAndGlyphs" fill="#1a2038">-3</text><text x="517.8" y="246.3" font-size="14" font-weight="bold" textLength="10.5" lengthAdjust="spacingAndGlyphs" fill="#1a2038">-2</text><text x="646.5" y="246.3" font-size="14" font-weight="bold" textLength="10.5" lengthAdjust="spacingAndGlyphs" fill="#1a2038">-1</text><text x="775.6" y="246.3" font-size="14" font-weight="bold" textLength="6.5" lengthAdjust="spacingAndGlyphs" fill="#1a2038">0</text><text x="904.3" y="246.3" font-size="14" font-weight="bold" textLength="6.5" lengthAdjust="spacingAndGlyphs" fill="#1a2038">1</text><text x="1033.2" y="246.3" font-size="14" font-weight="bold" textLength="6.5" lengthAdjust="spacingAndGlyphs" fill="#1a2038">2</text><text x="1163.6" y="246.3" font-size="14" font-weight="bold" textLength="6.5" lengthAdjust="spacingAndGlyphs" fill="#1a2038">3</text><text x="1292.2" y="246.3" font-size="14" font-weight="bold" textLength="6.5" lengthAdjust="spacingAndGlyphs" fill="#1a2038">4</text><text x="1422.4" y="246.3" font-size="14" font-weight="bold" textLength="6.5" lengthAdjust="spacingAndGlyphs" fill="#1a2038">5</text><text x="10" y="245.3" font-size="11" font-weight="bold" textLength="12" lengthAdjust="spacingAndGlyphs" fill="#1a2038">IN</text><text transform="translate(29.3 301.7) rotate(-90)" font-size="14" font-weight="bold" textLength="6.5" lengthAdjust="spacingAndGlyphs" fill="#1a2038">3</text><text transform="translate(29.3 430.4) rotate(-90)" font-size="14" font-weight="bold" textLength="6.5" lengthAdjust="spacingAndGlyphs" fill="#1a2038">2</text><text transform="translate(29.3 559.7) rotate(-90)" font-size="14" font-weight="bold" textLength="6.5" lengthAdjust="spacingAndGlyphs" fill="#1a2038">1</text><text transform="translate(29.3 689.4) rotate(-90)" font-size="14" font-weight="bold" textLength="6.5" lengthAdjust="spacingAndGlyphs" fill="#1a2038">0</text><text transform="translate(29.3 818.1) rotate(-90)" font-size="14" font-weight="bold" textLength="10.5" lengthAdjust="spacingAndGlyphs" fill="#1a2038">-1</text><text transform="translate(29.3 947.5) rotate(-90)" font-size="14" font-weight="bold" textLength="10.5" lengthAdjust="spacingAndGlyphs" fill="#1a2038">-2</text><text transform="translate(29.3 1077.1) rotate(-90)" font-size="14" font-weight="bold" textLength="10.5" lengthAdjust="spacingAndGlyphs" fill="#1a2038">-3</text></g><circle cx="1514.3" cy="251.3" r="15.8" fill="#fffbea" stroke="#f6b223" stroke-width="2.8"/><path d="M1514.3 228.5l2.8 19.8l17.5 3l-17.5 3l-2.8 19.5l-2.8-19.5l-20-3l20-3z" fill="#8a4640"/><text x="1518.3" y="246.3" font-family="Liberation Serif" font-weight="bold" font-size="20" fill="#111" stroke="#111" stroke-width="0.4">N</text><rect x="1511" y="297" width="8" height="213" fill="#f9dcaa" stroke="#c47a4e" stroke-width="1.3"/><circle cx="1515.2" cy="289.8" r="9.2" fill="#fdf0d0" stroke="#c47a4e" stroke-width="2"/><path d="M1510 290h10M1515 285v10" stroke="#111" stroke-width="1.6"/><circle cx="1515.2" cy="518.8" r="9.2" fill="#fdf0d0" stroke="#c47a4e" stroke-width="2"/><path d="M1510 518.8h10" stroke="#111" stroke-width="1.8"/><rect x="1503.5" y="423.5" width="23" height="14.5" fill="#b0b070" stroke="#c47a4e" stroke-width="1.3"/></svg>
<div class="a" style="left:1538px;top:195.5px;width:14px;height:976.5px;background:#fbfbfb"></div>
<div class="a" style="left:1540.5px;top:679.5px;width:9.5px;height:9.5px;border-radius:50%;background:#d4d4d4;border:1px solid #c4c4c4"></div>
<svg style="left:0;top:0" width="2048" height="240"><rect x="1568.5" y="205" width="10.5" height="10.5" rx="2" fill="#fff" stroke="#5a8ad8" stroke-width="1.5"/><path d="M1571 210.2h5.5M1573.8 207.5v5.5" stroke="#000" stroke-width="1.5"/><path d="M1581 208.5h6" stroke="#000" stroke-width="1.5"/><rect x="1585" y="213" width="12.5" height="12" rx="2" fill="#fff" stroke="#5a8ad8" stroke-width="1.5"/><path d="M1588 219h6.5M1591.2 216v6" stroke="#000" stroke-width="1.5"/><rect x="1568.5" y="222" width="10.5" height="10.5" rx="2" fill="#fff" stroke="#5a8ad8" stroke-width="1.5"/><path d="M1571 227.2h5.5M1573.8 224.5v5.5" stroke="#000" stroke-width="1.5"/><path d="M1581 229h6" stroke="#000" stroke-width="1.5"/><rect x="1618" y="205" width="10.5" height="10.5" rx="2" fill="#000" stroke="#4a7ad0" stroke-width="1.5"/><path d="M1620.5 210.2h5.5M1623.3 207.5v5.5" stroke="#fff" stroke-width="1.5"/><path d="M1631 208.5h6" stroke="#000" stroke-width="1.5"/><rect x="1635" y="213" width="12.5" height="12" rx="2" fill="#000" stroke="#4a7ad0" stroke-width="1.5"/><path d="M1638 219h6.5M1641.2 216v6" stroke="#fff" stroke-width="1.5"/><rect x="1618" y="222" width="10.5" height="10.5" rx="2" fill="#000" stroke="#4a7ad0" stroke-width="1.5"/><path d="M1620.5 227.2h5.5M1623.3 224.5v5.5" stroke="#fff" stroke-width="1.5"/><path d="M1631 229h6" stroke="#000" stroke-width="1.5"/><defs><linearGradient id="glock" x1="0" y1="0" x2="1" y2="1"><stop offset="0" stop-color="#fbd038"/><stop offset="0.6" stop-color="#f5a83a"/><stop offset="1" stop-color="#f8c040"/></linearGradient></defs><path d="M1672.5 216V211L1677.5 204.5H1689L1694.5 211V216M1678.5 216V211L1680.5 208.5H1687L1688.5 211V216" fill="none" stroke="#7a7a7a" stroke-width="1.4"/><rect x="1670.5" y="216" width="26" height="18.3" fill="url(#glock)" stroke="#e89030" stroke-width="1.2"/><path d="M1718.5 216V211L1723.5 204.5H1735L1740.5 211V216M1724.5 216V211L1726.5 208.5H1733L1734.5 211V216" fill="none" stroke="#7a7a7a" stroke-width="1.4"/><rect x="1717" y="216.3" width="25.5" height="17.7" fill="#fff" stroke="#000" stroke-width="2.4"/><path d="M1718 217.5l23 15.5M1741 217.5l-23 15.5" stroke="#000" stroke-width="1.3"/><circle cx="1729.5" cy="225" r="1.6" fill="#000"/><path d="M1763 216V211L1768 204.5H1779.5L1783.5 209.5V211H1779L1777.5 208.5H1771L1769 211V216" fill="none" stroke="#7a7a7a" stroke-width="1.4"/><rect x="1761" y="216" width="26" height="18.3" fill="url(#glock)" stroke="#e89030" stroke-width="1.2"/></svg>
<div class="a" style="left:1553px;top:238px;width:482px;height:446px;background:#fff;border:1.5px solid #c4c4c4;overflow:hidden"><div class="a" style="left:0;top:51.1px;width:480px;height:52.2px;background:#f4f4f4"></div><div class="a" style="left:0;top:155.5px;width:480px;height:52.2px;background:#f4f4f4"></div><div class="a" style="left:0;top:259.9px;width:480px;height:52.2px;background:#f4f4f4"></div><div class="a" style="left:0;top:364.3px;width:480px;height:52.2px;background:#f4f4f4"></div></div>
<svg style="left:0;top:0" width="1600" height="300"><path d="M1567 258.5l12 6.2l-12 6.2z" fill="#8a8a8a"/></svg>
<div class="t" style="left:1584.5px;top:256px;font-size:16.5px">1</div>
<div class="t" style="left:1585px;top:308px;font-size:16.5px">2</div>
<div class="t" style="left:1688px;top:256px;font-size:17.5px">Underlay</div>
<div class="t" style="left:1688px;top:308px;font-size:17.5px">Letters</div>
<div class="a" style="left:1626px;top:293px;width:49px;height:48px;background:#fff"></div>
<svg style="left:0;top:0" width="1700" height="340"><rect x="1627" y="259.5" width="46.5" height="11.5" rx="4" fill="#cacaca"/><text x="1627.5" y="270.5" font-family="Liberation Sans" font-weight="bold" font-size="14" textLength="46" lengthAdjust="spacingAndGlyphs" fill="#c4c4c4" stroke="#c8c8c8" stroke-width="2">KarlieBelle</text><text x="1627.5" y="321.8" font-family="Liberation Sans" font-weight="bold" font-size="11.5" textLength="47" lengthAdjust="spacingAndGlyphs" fill="#333" stroke="#333" stroke-width="0.9">KarlieBelle</text></svg>
<div class="a" style="left:1553px;top:684px;width:483px;height:15px;background:#fbfbfb;border-bottom:1px solid #d8d8d8"></div>
<div class="a" style="left:1789.5px;top:687px;width:9px;height:9px;border-radius:50%;background:#d4d4d4;border:1px solid #c8c8c8"></div>
<div class="a" style="left:1564px;top:718px;width:460.5px;height:438px;background:#e2e2e2;border:1px solid #dadada;border-radius:7px"></div>
<div class="a" style="left:1756px;top:706px;width:77px;height:26px;border-radius:5px;background:linear-gradient(#5aa2f8,#1c74f2)"></div>
<div class="t" style="left:1772.5px;top:711px;font-size:17.5px;color:#fff">Color</div>
<div class="pb" style="left:1594.5px;top:749px;width:111px;height:24px"></div>
<div class="pb" style="left:1725px;top:747.5px;width:111px;height:23.5px"></div>
<div class="pb" style="left:1852px;top:749px;width:111.5px;height:24px"></div>
<div class="t" style="left:1622px;top:752.5px;font-size:17.5px">Thread</div>
<div class="t" style="left:1745.5px;top:751px;font-size:17.5px">1 Color...</div>
<div class="t" style="left:1869.5px;top:752.3px;font-size:17.9px">Preferred</div>
<div class="t" style="left:1615.5px;top:785px;font-size:18.3px">Click below to change individual colors.</div>
<div class="a" style="left:1585px;top:818px;width:418.5px;height:318.5px;background:#fff;border:1px solid #c4c4c4"></div>
<div class="a" style="left:1586.5px;top:820px;width:115px;height:55.5px;background:#efefef"></div>
<div class="a" style="left:1586px;top:875.5px;width:417px;height:1.5px;background:#c9c9c9"></div>
<div class="a" style="left:1586px;top:934px;width:417px;height:1.5px;background:#c9c9c9"></div>
<div class="a" style="left:1586px;top:992.5px;width:417px;height:1.5px;background:#c9c9c9"></div>
<div class="a" style="left:1586px;top:1051px;width:417px;height:1.5px;background:#c9c9c9"></div>
<div class="a" style="left:1586px;top:1109.5px;width:417px;height:1.5px;background:#c9c9c9"></div>
<div class="a" style="left:1586.5px;top:879px;width:115px;height:55px;background:#343537"></div>
<div class="a" style="left:1586.5px;top:935.5px;width:115px;height:1.5px;background:#444"></div>
<div class="t" style="left:1707.5px;top:823.5px;font-size:16px">1: Underlay</div>
<div class="t" style="left:1707px;top:881.3px;font-size:16.5px">2: Madeira Thread Chest</div>
<div class="t" style="left:1707.5px;top:901px;font-size:16px">1000 Black</div>
<div class="t" style="left:28.5px;top:1187.6px;font-size:21px">Zoom: 76%&nbsp; Cursor: 5 (3/4)" x -2(1/4)"</div>
<div class="t" style="left:1026.5px;top:1187.6px;font-size:20.5px">Hoop: 5 (1/8) x 7 (1/16)</div>
<div class="t" style="left:1310.5px;top:1187.6px;font-size:20.5px">5 " x 1 (1/16)"</div>
<div class="t" style="left:1635.5px;top:1190px;font-size:21.5px">Stitches:4654</div>
<div class="t" style="left:1819px;top:1189px;font-size:21px">Ndls/Cols: 2/2</div>
</body></html>
